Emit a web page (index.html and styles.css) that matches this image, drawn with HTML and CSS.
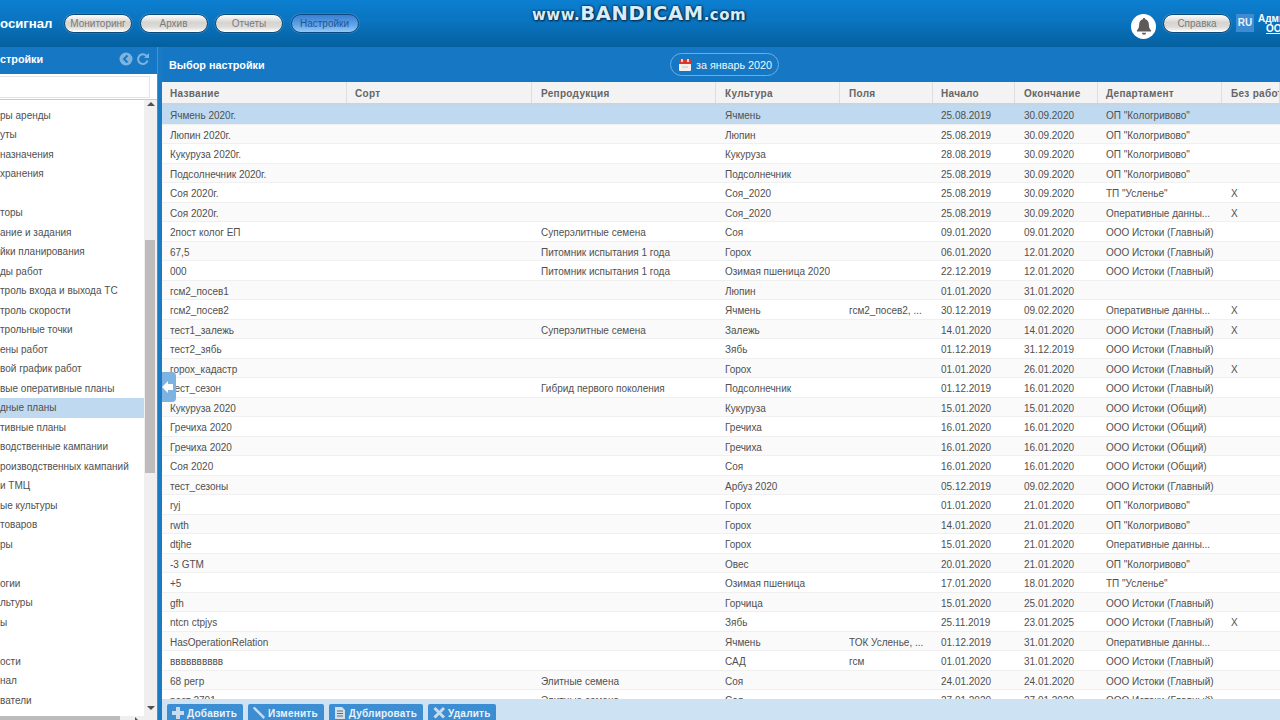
FILE: index.html
```html
<!DOCTYPE html>
<html lang="ru">
<head>
<meta charset="utf-8">
<title>Настройки</title>
<link rel="stylesheet" href="styles.css">
</head>
<body>
<div class="app">
  <header class="topbar">
    <div class="brand">осигнал</div>
    <nav class="nav">
      <a class="pill">Мониторинг</a>
      <a class="pill">Архив</a>
      <a class="pill">Отчеты</a>
      <a class="pill active">Настройки</a>
    </nav>
    <div class="watermark">www.<b>BANDICAM</b>.com</div>
    <div class="tools">
      <span class="bell"><svg viewBox="0 0 24 24" width="20" height="20"><path fill="#5f5a5a" d="M12 2.5c1 0 1.5.7 1.5 1.5 3 .7 4.300 3.300 4.300 6.200 0 3.800 1 5.300 2.700 7.300v1H3.500v-1c1.700-2 2.700-3.500 2.700-7.300 0-2.900 1.300-5.500 4.300-6.200 0-.8.500-1.500 1.500-1.500zM9.500 20h5a2.500 2.500 0 0 1-5 0z"/></svg></span>
      <a class="pill help">Справка</a>
      <span class="lang">RU</span>
      <div class="user"><b>Админ</b><u>ООО</u></div>
    </div>
  </header>
  <div class="content">
    <aside class="side">
      <div class="side-head">
        <span>стройки</span>
        <span class="side-icons">
          <svg viewBox="0 0 14 14" width="14" height="14"><circle cx="7" cy="7" r="6.500" fill="#7fb3de"/><path d="M8.500 3.500 5 7l3.500 3.500" fill="none" stroke="#1678c5" stroke-width="2"/></svg>
          <svg viewBox="0 0 14 14" width="14" height="14"><path d="M11.500 8.500a4.800 4.800 0 1 1-1-4.500" fill="none" stroke="#7fb3de" stroke-width="2"/><path d="M13 1v5H8z" fill="#7fb3de"/></svg>
        </span>
      </div>
      <div class="side-search"><div class="search-box"></div></div>
      <div class="side-body">
        <ul class="tree">
          <li>ры аренды</li><li>уты</li><li>назначения</li><li>хранения</li><li></li>
          <li>торы</li><li>ание и задания</li><li>йки планирования</li><li>ды работ</li>
          <li>троль входа и выхода ТС</li><li>троль скорости</li><li>трольные точки</li>
          <li>ены работ</li><li>вой график работ</li><li>вые оперативные планы</li>
          <li class="sel">дные планы</li><li>тивные планы</li><li>водственные кампании</li>
          <li>роизводственных кампаний</li><li>и ТМЦ</li><li>ые культуры</li><li>товаров</li>
          <li>ры</li><li></li><li>огии</li><li>льтуры</li><li>ы</li><li></li>
          <li>ости</li><li>нал</li><li>ватели</li>
        </ul>
        <div class="vscroll"><i class="arr up"></i><i class="thumb"></i><i class="arr down"></i></div>
      </div>
      <div class="hscroll"><i class="hthumb"></i><i class="harr"></i></div>
    </aside>
    <div class="split"></div>
    <main class="main">
      <span class="handle"><svg viewBox="0 0 12 14" width="12" height="14"><path d="M0 7 6 1v3h5v6H6v3z" fill="#fff"/></svg></span>
      <div class="title-bar">
        <h1>Выбор настройки</h1>
        <div class="date-pill">
          <svg viewBox="0 0 14 14" width="14" height="14"><rect x="1" y="2" width="12" height="11" rx="1" fill="#f4f1ec"/><path d="M1 2h12v4H1z" fill="#d8382e"/><path d="M4 1v3M10 1v3" stroke="#fff" stroke-width="1.500"/><path d="M4 9h6" stroke="#c9c3ba"/></svg>
          за январь 2020
        </div>
      </div>
      <div class="grid">
        <div class="row head"><span>Название</span><span>Сорт</span><span>Репродукция</span><span>Культура</span><span>Поля</span><span>Начало</span><span>Окончание</span><span>Департамент</span><span>Без работ</span></div>
        <div class="row sel"><span>Ячмень 2020г.</span><span></span><span></span><span>Ячмень</span><span></span><span>25.08.2019</span><span>30.09.2020</span><span>ОП "Кологривово"</span><span></span></div>
        <div class="row"><span>Люпин 2020г.</span><span></span><span></span><span>Люпин</span><span></span><span>25.08.2019</span><span>30.09.2020</span><span>ОП "Кологривово"</span><span></span></div>
        <div class="row"><span>Кукуруза 2020г.</span><span></span><span></span><span>Кукуруза</span><span></span><span>28.08.2019</span><span>30.09.2020</span><span>ОП "Кологривово"</span><span></span></div>
        <div class="row"><span>Подсолнечник 2020г.</span><span></span><span></span><span>Подсолнечник</span><span></span><span>25.08.2019</span><span>30.09.2020</span><span>ОП "Кологривово"</span><span></span></div>
        <div class="row"><span>Соя 2020г.</span><span></span><span></span><span>Соя_2020</span><span></span><span>25.08.2019</span><span>30.09.2020</span><span>ТП "Усленье"</span><span>X</span></div>
        <div class="row"><span>Соя 2020г.</span><span></span><span></span><span>Соя_2020</span><span></span><span>25.08.2019</span><span>30.09.2020</span><span>Оперативные данны...</span><span>X</span></div>
        <div class="row"><span>2пост колог ЕП</span><span></span><span>Суперэлитные семена</span><span>Соя</span><span></span><span>09.01.2020</span><span>09.01.2020</span><span>ООО Истоки (Главный)</span><span></span></div>
        <div class="row"><span>67,5</span><span></span><span>Питомник испытания 1 года</span><span>Горох</span><span></span><span>06.01.2020</span><span>12.01.2020</span><span>ООО Истоки (Главный)</span><span></span></div>
        <div class="row"><span>000</span><span></span><span>Питомник испытания 1 года</span><span>Озимая пшеница 2020</span><span></span><span>22.12.2019</span><span>12.01.2020</span><span>ООО Истоки (Главный)</span><span></span></div>
        <div class="row"><span>гсм2_посев1</span><span></span><span></span><span>Люпин</span><span></span><span>01.01.2020</span><span>31.01.2020</span><span></span><span></span></div>
        <div class="row"><span>гсм2_посев2</span><span></span><span></span><span>Ячмень</span><span>гсм2_посев2, ...</span><span>30.12.2019</span><span>09.02.2020</span><span>Оперативные данны...</span><span>X</span></div>
        <div class="row"><span>тест1_залежь</span><span></span><span>Суперэлитные семена</span><span>Залежь</span><span></span><span>14.01.2020</span><span>14.01.2020</span><span>ООО Истоки (Главный)</span><span>X</span></div>
        <div class="row"><span>тест2_зябь</span><span></span><span></span><span>Зябь</span><span></span><span>01.12.2019</span><span>31.12.2019</span><span>ООО Истоки (Главный)</span><span></span></div>
        <div class="row"><span>горох_кадастр</span><span></span><span></span><span>Горох</span><span></span><span>01.01.2020</span><span>26.01.2020</span><span>ООО Истоки (Главный)</span><span>X</span></div>
        <div class="row"><span>тест_сезон</span><span></span><span>Гибрид первого поколения</span><span>Подсолнечник</span><span></span><span>01.12.2019</span><span>16.01.2020</span><span>ООО Истоки (Главный)</span><span></span></div>
        <div class="row"><span>Кукуруза 2020</span><span></span><span></span><span>Кукуруза</span><span></span><span>15.01.2020</span><span>15.01.2020</span><span>ООО Истоки (Общий)</span><span></span></div>
        <div class="row"><span>Гречиха 2020</span><span></span><span></span><span>Гречиха</span><span></span><span>16.01.2020</span><span>16.01.2020</span><span>ООО Истоки (Общий)</span><span></span></div>
        <div class="row"><span>Гречиха 2020</span><span></span><span></span><span>Гречиха</span><span></span><span>16.01.2020</span><span>16.01.2020</span><span>ООО Истоки (Общий)</span><span></span></div>
        <div class="row"><span>Соя 2020</span><span></span><span></span><span>Соя</span><span></span><span>16.01.2020</span><span>16.01.2020</span><span>ООО Истоки (Общий)</span><span></span></div>
        <div class="row"><span>тест_сезоны</span><span></span><span></span><span>Арбуз 2020</span><span></span><span>05.12.2019</span><span>09.02.2020</span><span>ООО Истоки (Главный)</span><span></span></div>
        <div class="row"><span>ryj</span><span></span><span></span><span>Горох</span><span></span><span>01.01.2020</span><span>21.01.2020</span><span>ОП "Кологривово"</span><span></span></div>
        <div class="row"><span>rwth</span><span></span><span></span><span>Горох</span><span></span><span>14.01.2020</span><span>21.01.2020</span><span>ОП "Кологривово"</span><span></span></div>
        <div class="row"><span>dtjhe</span><span></span><span></span><span>Горох</span><span></span><span>15.01.2020</span><span>21.01.2020</span><span>Оперативные данны...</span><span></span></div>
        <div class="row"><span>-3 GTM</span><span></span><span></span><span>Овес</span><span></span><span>20.01.2020</span><span>21.01.2020</span><span>ОП "Кологривово"</span><span></span></div>
        <div class="row"><span>+5</span><span></span><span></span><span>Озимая пшеница</span><span></span><span>17.01.2020</span><span>18.01.2020</span><span>ТП "Усленье"</span><span></span></div>
        <div class="row"><span>gfh</span><span></span><span></span><span>Горчица</span><span></span><span>15.01.2020</span><span>25.01.2020</span><span>ООО Истоки (Главный)</span><span></span></div>
        <div class="row"><span>ntcn ctpjys</span><span></span><span></span><span>Зябь</span><span></span><span>25.11.2019</span><span>23.01.2025</span><span>ООО Истоки (Главный)</span><span>X</span></div>
        <div class="row"><span>HasOperationRelation</span><span></span><span></span><span>Ячмень</span><span>ТОК Усленье, ...</span><span>01.12.2019</span><span>31.01.2020</span><span>Оперативные данны...</span><span></span></div>
        <div class="row"><span>вввввввввв</span><span></span><span></span><span>САД</span><span>гсм</span><span>01.01.2020</span><span>31.01.2020</span><span>ООО Истоки (Главный)</span><span></span></div>
        <div class="row"><span>68 регр</span><span></span><span>Элитные семена</span><span>Соя</span><span></span><span>24.01.2020</span><span>24.01.2020</span><span>ООО Истоки (Главный)</span><span></span></div>
        <div class="row"><span>рост 2701</span><span></span><span>Элитные семена</span><span>Соя</span><span></span><span>27.01.2020</span><span>27.01.2020</span><span>ООО Истоки (Главный)</span><span></span></div>
      </div>
      <div class="actions">
        <button class="btn"><svg viewBox="0 0 14 14" width="14" height="14"><path d="M5 1h4v4h4v4H9v4H5V9H1V5h4z" fill="#c9dcec"/></svg>Добавить</button>
        <button class="btn"><svg viewBox="0 0 14 14" width="14" height="14"><path d="M1 1.500 3 1l10 10-1.500 2L1.500 3z" fill="#c9dcec"/></svg>Изменить</button>
        <button class="btn"><svg viewBox="0 0 14 14" width="14" height="14"><path d="M2 1h7l3 3v9H2z" fill="#d5dfe8"/><path d="M4 5h6M4 7.500h6M4 10h6" stroke="#55708a"/></svg>Дублировать</button>
        <button class="btn"><svg viewBox="0 0 14 14" width="14" height="14"><path d="M2.500 2 12 11.500M12 2l-9.500 9.500" stroke="#c9dcec" stroke-width="3"/></svg>Удалить</button>
      </div>
    </main>
  </div>
</div>
</body>
</html>
```
FILE: styles.css
```css
* { box-sizing: border-box; }
html, body { margin: 0; height: 100%; overflow: hidden; }
body { font-family: "Liberation Sans", Arial, sans-serif; font-size: 10px; color: #505050; background: #fff; }
.app { width: 1280px; height: 720px; display: flex; flex-direction: column; }

.topbar { height: 47px; flex: none; display: flex; align-items: center; position: relative; background: linear-gradient(#0c7fd0, #0a74c0 45%, #04609f); overflow: hidden; }
.brand { width: 64px; color: #fff; font-size: 13.200px; font-weight: bold; }
.nav { display: flex; gap: 7.500px; margin-top: -1px; }
.pill { display: block; width: 68px; height: 19px; line-height: 17px; text-align: center; border-radius: 9.500px; color: #7a7a7a; font-size: 10px; border: 1px solid #0a4a78; background: linear-gradient(#fdfdfd, #d6d4d0 45%, #dddbd8 70%, #fff); box-shadow: 0 0 1px #d5e5f2; }
.pill.active { color: #23558c; background: linear-gradient(#3a7fd0, #5fa2e8 55%, #95c9f5); border-color: #0b4a80; }
.watermark { position: absolute; left: 532px; top: 3px; color: #d8ecfb; font-family: "DejaVu Sans", sans-serif; font-weight: bold; font-size: 15px; letter-spacing: .5px; line-height: 22px; text-shadow: 0 0 2px #06304f, 0 0 3px #06304f, 1px 1px 2px #06304f; white-space: nowrap; }
.watermark b { font-size: 19.500px; letter-spacing: .6px; }
.tools { margin-left: auto; display: flex; align-items: center; width: 149px; height: 100%; flex: none; }
.bell { width: 25px; height: 25px; margin-top: 5px; border-radius: 50%; background: #fff; display: flex; align-items: center; justify-content: center; flex: none; }
.help { margin: -1px 5px 0 7px; flex: none; }
.lang { width: 18px; height: 18px; flex: none; margin-top: -1px; background: #3d8bd2; color: #e6f2fb; font-weight: bold; font-size: 10px; line-height: 18px; text-align: center; }
.user { width: 40px; flex: none; margin-left: 4px; color: #fff; font-size: 10px; line-height: 10px; white-space: nowrap; overflow: hidden; display: flex; flex-direction: column; }
.user u { font-weight: bold; padding-left: 8px; }

.content { flex: 1; display: flex; min-height: 0; }
.side { width: 157px; flex: none; display: flex; flex-direction: column; background: #fff; overflow: hidden; }
.side-head { height: 27px; flex: none; background: #1678c5; color: #fff; font-weight: bold; font-size: 10.800px; display: flex; align-items: center; justify-content: space-between; padding: 0 7px 3px 0; }
.side-icons { display: flex; gap: 3px; }
.side-search { height: 26px; flex: none; padding: 2px 7px 0 0; border-bottom: 1px solid #ccc; }
.search-box { height: 22px; border: 1px solid #e4e4e4; border-left: 0; background: #fff; }
.side-body { flex: 1; min-height: 0; display: flex; }
.tree { list-style: none; margin: 0; padding: 5.750px 0 0; flex: 1; overflow: hidden; }
.tree li { height: 19.500px; line-height: 20.500px; white-space: nowrap; }
.tree li.sel { background: #bfdaf0; }
.vscroll { width: 13px; flex: none; display: flex; flex-direction: column; align-items: center; background: #efefef; position: relative; }
.thumb { display: block; position: absolute; left: 1px; right: 2px; top: 140px; height: 233px; background: #bdbbbc; }
.arr { position: absolute; left: 3px; width: 0; height: 0; border: 4px solid transparent; }
.arr.up { top: 2px; border-bottom-color: #505050; border-top-width: 0; }
.arr.down { bottom: 6px; border-top-color: #505050; border-bottom-width: 0; }
.hscroll { height: 4px; flex: none; background: #efefef; display: flex; }
.hthumb { display: block; width: 120px; height: 100%; background: #bdbbbc; }
.harr { display: block; width: 0; height: 0; margin: 1px 0 0 15px; border-style: solid; border-width: 3px 0 3px 3px; border-color: transparent transparent transparent #505050; }

.split { width: 5px; flex: none; background: linear-gradient(90deg, #5c9ed6, #1a7ac4 30%); }
.main { flex: 1; min-width: 0; display: flex; flex-direction: column; position: relative; overflow: hidden; }
.handle { position: absolute; left: 0; top: 325px; width: 14px; height: 30px; background: #7cb3e0; border-radius: 0 4px 4px 0; display: flex; align-items: center; z-index: 2; }
.title-bar { height: 35px; flex: none; background: #1678c5; display: flex; align-items: center; position: relative; padding-left: 7px; }
.title-bar h1 { margin: 0; color: #fff; font-size: 10.800px; font-weight: bold; }
.date-pill { position: absolute; left: 508px; top: 6px; width: 109px; height: 23px; border: 1px solid #6aaee4; border-radius: 11.500px; color: #f0f7fd; font-size: 10.800px; display: flex; align-items: center; gap: 4px; padding-left: 7px; }

.grid { flex: 1; min-height: 0; overflow: hidden; }
.row { display: grid; grid-template-columns: 185px 185px 184px 124px 93px 82px 83px 124px 1fr; height: 19.500px; line-height: 21px; background: #fff; border-bottom: 1px solid #f0f0f0; white-space: nowrap; }
.row:nth-child(odd) { background: #fafafa; }
.row span { padding-left: 8px; overflow: hidden; }
.row span:nth-child(n+3) { padding-left: 9px; }
.row span:nth-child(6), .row span:nth-child(8) { padding-left: 8px; }
.row.head { height: 23px; line-height: 23.500px; background: #f3f3f3; border-bottom: 2px solid #c5d5e4; font-weight: bold; color: #666; letter-spacing: .3px; }
.row.head span { border-right: 1px solid #ddd; }
.row.sel { background: #bfdaf0; }

.actions { height: 21px; flex: none; background: #cde2f3; display: flex; gap: 5px; padding: 5px 0 0 5px; overflow: hidden; }
.btn { height: 20px; padding: 2px 6px 0 4px; border: 0; border-radius: 2px 2px 0 0; background: #3c8dd2; color: #e9f3fb; font: bold 10px "Liberation Sans", Arial, sans-serif; display: flex; align-items: flex-start; gap: 2px; line-height: 16px; letter-spacing: .2px; }
```
